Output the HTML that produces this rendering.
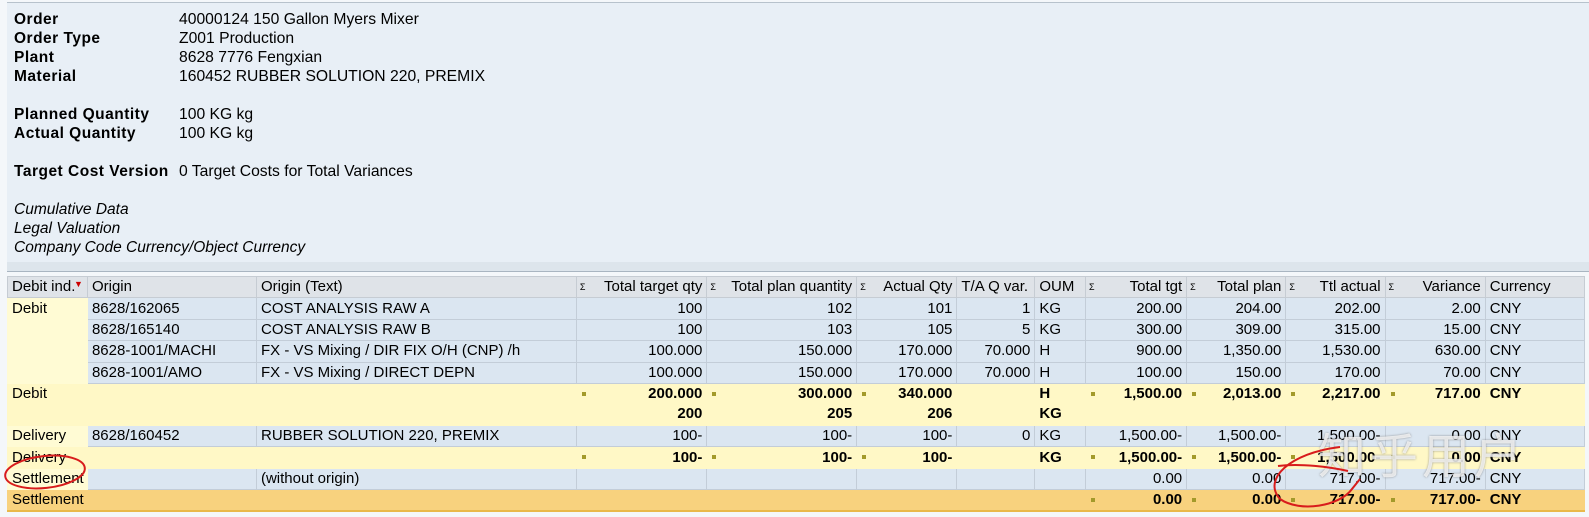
<!DOCTYPE html>
<html><head><meta charset="utf-8"><style>
*{margin:0;padding:0;box-sizing:border-box}
body{width:1589px;height:517px;background:#f4f7fa;font-family:"Liberation Sans","DejaVu Sans",sans-serif;position:relative;overflow:hidden;color:#000}
#top{position:absolute;left:7px;top:2px;width:1582px;height:262px;background:#e8eff6;border-top:1px solid #b7c2cc}
.l{position:absolute;left:14px;font-size:15.5px;font-weight:bold;line-height:19px;letter-spacing:0.5px}
.v{position:absolute;left:179px;font-size:15.7px;line-height:19px}
.i{position:absolute;left:14px;font-size:15.5px;font-style:italic;line-height:19px}
#split{position:absolute;left:7px;top:262px;width:1582px;height:10px;background:#dde5ec;border-bottom:1px solid #a9b5c1}
table{position:absolute;left:7px;top:276px;width:1578px;border-collapse:collapse;table-layout:fixed;font-size:15px}
td{height:21.4px;padding:0 4px;white-space:nowrap;overflow:hidden;line-height:20px;border:1px solid #c3cdd8;background:#dbe6f1;position:relative}
tr.h td{background:#dfe3e8;border-color:#c6ccd3}
td.r{text-align:right}
td.y{background:#fffbd4;border-color:#fffbd4}
tr.t td{background:#fff8c6;border-color:#fff8c6;border-top:1px solid #d8d8c8;font-weight:bold}
tr.t td.f{font-weight:normal}
tr.s td{background:#f8d27e;border-color:#f8d27e;border-top:1px solid #e8b858;border-bottom:2px solid #e9b84a;font-weight:bold}
tr.s td.f{font-weight:normal}
.sg{position:absolute;left:3px;top:0;font-size:9px;font-weight:normal}
.dot{position:absolute;left:5px;top:8px;width:4px;height:4px;background:#a39a2a}
</style></head><body>
<div id="top"></div>
<div class="l" style="top:10px">Order</div><div class="v" style="top:10px">40000124 150 Gallon Myers Mixer</div>
<div class="l" style="top:29px">Order Type</div><div class="v" style="top:29px">Z001 Production</div>
<div class="l" style="top:48px">Plant</div><div class="v" style="top:48px">8628 7776 Fengxian</div>
<div class="l" style="top:67px">Material</div><div class="v" style="top:67px">160452 RUBBER SOLUTION 220, PREMIX</div>
<div class="l" style="top:105px">Planned Quantity</div><div class="v" style="top:105px">100 KG kg</div>
<div class="l" style="top:124px">Actual Quantity</div><div class="v" style="top:124px">100 KG kg</div>
<div class="l" style="top:162px">Target Cost Version</div><div class="v" style="top:162px">0 Target Costs for Total Variances</div>
<div class="i" style="top:200px">Cumulative Data</div>
<div class="i" style="top:219px">Legal Valuation</div>
<div class="i" style="top:238px">Company Code Currency/Object Currency</div>
<div id="split"></div>
<table>
<colgroup><col style="width:79px"><col style="width:167px"><col style="width:316px"><col style="width:129px"><col style="width:148px"><col style="width:99px"><col style="width:77px"><col style="width:50px"><col style="width:100px"><col style="width:98px"><col style="width:98px"><col style="width:99px"><col style="width:98px"></colgroup>
<tr class="h"><td>Debit ind.<span style="position:absolute;left:66px;top:-3px;color:#c00;font-size:9px">▼</span></td><td>Origin</td><td>Origin (Text)</td><td class="r"><span class="sg">Σ</span>Total target qty</td><td class="r"><span class="sg">Σ</span>Total plan quantity</td><td class="r"><span class="sg">Σ</span>Actual Qty</td><td>T/A Q var.</td><td>OUM</td><td class="r"><span class="sg">Σ</span>Total tgt</td><td class="r"><span class="sg">Σ</span>Total plan</td><td class="r"><span class="sg">Σ</span>Ttl actual</td><td class="r"><span class="sg">Σ</span>Variance</td><td>Currency</td></tr>
<tr><td class="y">Debit</td><td>8628/162065</td><td>COST ANALYSIS RAW A</td><td class="r">100</td><td class="r">102</td><td class="r">101</td><td class="r">1</td><td>KG</td><td class="r">200.00</td><td class="r">204.00</td><td class="r">202.00</td><td class="r">2.00</td><td>CNY</td></tr>
<tr><td class="y"></td><td>8628/165140</td><td>COST ANALYSIS RAW B</td><td class="r">100</td><td class="r">103</td><td class="r">105</td><td class="r">5</td><td>KG</td><td class="r">300.00</td><td class="r">309.00</td><td class="r">315.00</td><td class="r">15.00</td><td>CNY</td></tr>
<tr><td class="y"></td><td>8628-1001/MACHI</td><td>FX - VS Mixing / DIR FIX O/H (CNP) /h</td><td class="r">100.000</td><td class="r">150.000</td><td class="r">170.000</td><td class="r">70.000</td><td>H</td><td class="r">900.00</td><td class="r">1,350.00</td><td class="r">1,530.00</td><td class="r">630.00</td><td>CNY</td></tr>
<tr><td class="y"></td><td>8628-1001/AMO</td><td>FX - VS Mixing / DIRECT DEPN</td><td class="r">100.000</td><td class="r">150.000</td><td class="r">170.000</td><td class="r">70.000</td><td>H</td><td class="r">100.00</td><td class="r">150.00</td><td class="r">170.00</td><td class="r">70.00</td><td>CNY</td></tr>
<tr class="t"><td class="f" style="vertical-align:top;height:42px">Debit</td><td></td><td></td><td class="r" style="vertical-align:top"><span class="dot"></span>200.000<br>200</td><td class="r" style="vertical-align:top"><span class="dot"></span>300.000<br>205</td><td class="r" style="vertical-align:top"><span class="dot"></span>340.000<br>206</td><td></td><td style="vertical-align:top">H<br>KG</td><td class="r" style="vertical-align:top"><span class="dot"></span>1,500.00</td><td class="r" style="vertical-align:top"><span class="dot"></span>2,013.00</td><td class="r" style="vertical-align:top"><span class="dot"></span>2,217.00</td><td class="r" style="vertical-align:top"><span class="dot"></span>717.00</td><td style="vertical-align:top">CNY</td></tr>
<tr><td class="y">Delivery</td><td>8628/160452</td><td>RUBBER SOLUTION 220, PREMIX</td><td class="r">100-</td><td class="r">100-</td><td class="r">100-</td><td class="r">0</td><td>KG</td><td class="r">1,500.00-</td><td class="r">1,500.00-</td><td class="r">1,500.00-</td><td class="r">0.00</td><td>CNY</td></tr>
<tr class="t"><td class="f">Delivery</td><td></td><td></td><td class="r"><span class="dot"></span>100-</td><td class="r"><span class="dot"></span>100-</td><td class="r"><span class="dot"></span>100-</td><td></td><td>KG</td><td class="r"><span class="dot"></span>1,500.00-</td><td class="r"><span class="dot"></span>1,500.00-</td><td class="r"><span class="dot"></span>1,500.00-</td><td class="r"><span class="dot"></span>0.00</td><td>CNY</td></tr>
<tr><td class="y">Settlement</td><td></td><td>(without origin)</td><td></td><td></td><td></td><td></td><td></td><td class="r">0.00</td><td class="r">0.00</td><td class="r">717.00-</td><td class="r">717.00-</td><td>CNY</td></tr>
<tr class="s"><td class="f">Settlement</td><td></td><td></td><td></td><td></td><td></td><td></td><td></td><td class="r"><span class="dot"></span>0.00</td><td class="r"><span class="dot"></span>0.00</td><td class="r"><span class="dot"></span>717.00-</td><td class="r"><span class="dot"></span>717.00-</td><td>CNY</td></tr>
</table>
<div style="position:absolute;left:1318px;top:426px;font-family:'Noto Sans CJK SC',sans-serif;font-size:48px;line-height:52px;color:rgba(255,255,255,0.75);text-shadow:0 0 2px rgba(110,110,110,0.7);letter-spacing:4px">知乎用户</div>
<svg style="position:absolute;left:0;top:0" width="1589" height="517">
<ellipse cx="45" cy="472" rx="40" ry="16" fill="none" stroke="#d81c1c" stroke-width="2" transform="rotate(-6 45 472)"/>
<path d="M1340 447 C1290 453 1262 479 1280 499 C1300 513 1340 506 1352 489 L1360 479" fill="none" stroke="#d81c1c" stroke-width="2"/>
<path d="M1278 466 C1300 463 1330 467 1348 471" fill="none" stroke="#d81c1c" stroke-width="2"/>
</svg>
</body></html>
